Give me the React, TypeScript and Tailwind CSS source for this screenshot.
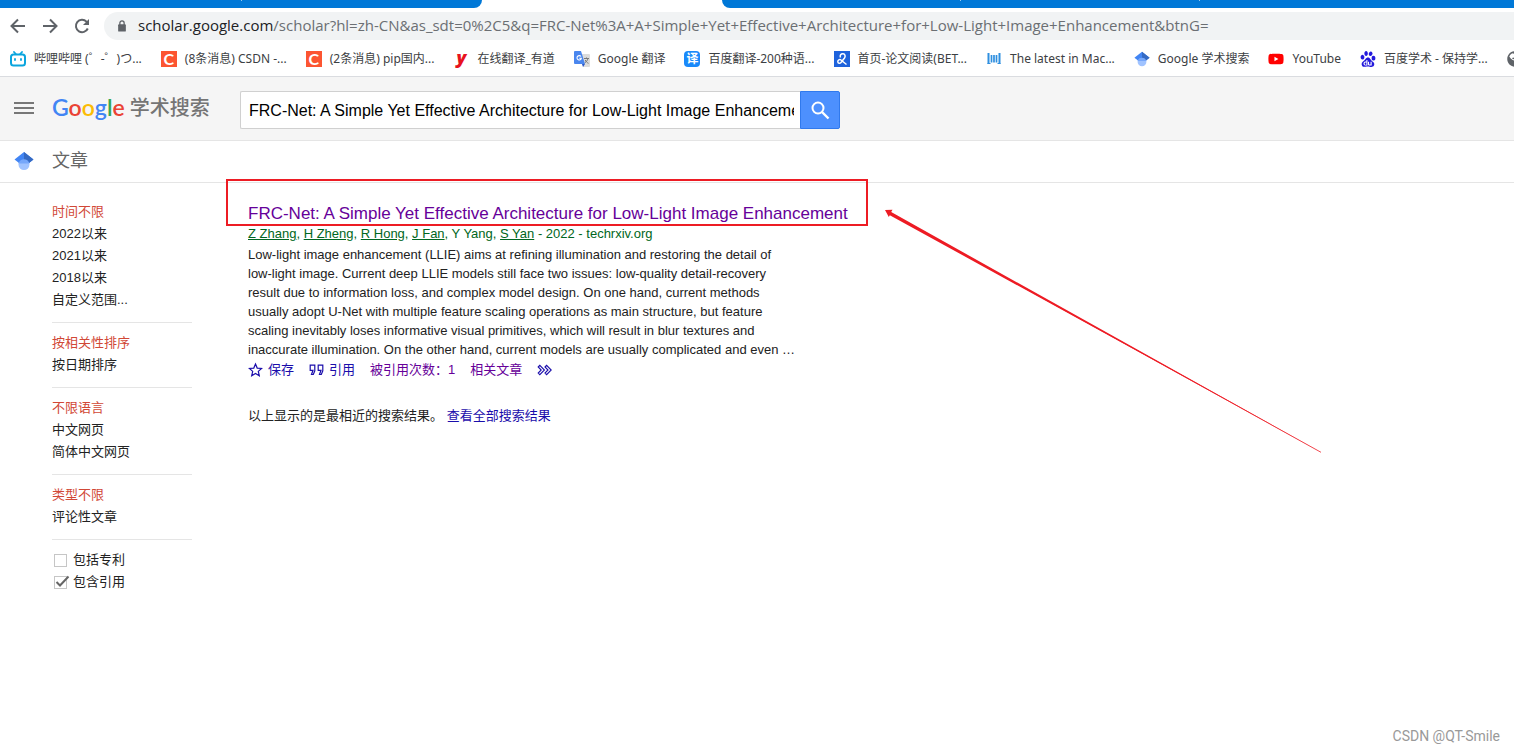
import type { ReactNode } from 'react'
import { FaYoutube, FaGlobeAmericas } from 'react-icons/fa'
import { SiBaidu } from 'react-icons/si'

type Bookmark = {
  label: string
  icon: ReactNode
}

type FilterGroup = {
  active: string
  options: string[]
}

const TITLE = 'FRC-Net: A Simple Yet Effective Architecture for Low-Light Image Enhancement'

const filterGroups: FilterGroup[] = [
  { active: '时间不限', options: ['2022以来', '2021以来', '2018以来', '自定义范围...'] },
  { active: '按相关性排序', options: ['按日期排序'] },
  { active: '不限语言', options: ['中文网页', '简体中文网页'] },
  { active: '类型不限', options: ['评论性文章'] },
]

const authors = [
  { name: 'Z Zhang', linked: true },
  { name: 'H Zheng', linked: true },
  { name: 'R Hong', linked: true },
  { name: 'J Fan', linked: true },
  { name: 'Y Yang', linked: false },
  { name: 'S Yan', linked: true },
]

function ScholarIcon({ className }: { className: string }) {
  return (
    <svg viewBox="0 0 20 20" className={className} aria-hidden="true">
      <circle cx="10" cy="13.5" r="5.5" fill="#a0c3ff" />
      <path d="M10 1 0.5 8.4 5 12a5.6 5.6 0 0 1 10 0l4.5-3.6z" fill="#4285f4" />
      <path d="M10 1l9.5 7.4L15 12a5.6 5.6 0 0 0-5-3z" fill="#356ac3" />
      <path d="M5 11.4a5.6 5.6 0 0 1 10 0 5.500 5.500 0 0 1 .4 1H4.600a5.500 5.500 0 0 1 .4-1z" fill="#76a7fa" />
    </svg>
  )
}

function BilibiliIcon() {
  return (
    <svg viewBox="0 0 16 16" className="size-4" fill="none" stroke="#0aa5de" strokeLinecap="round" aria-hidden="true">
      <rect x="1" y="3.500" width="14" height="11" rx="2.500" strokeWidth="2" />
      <path d="M4 1l1.800 2M12 1l-1.800 2" strokeWidth="1.800" />
      <path d="M5 8v1M11 8v1" strokeWidth="1.800" />
    </svg>
  )
}

function CsdnIcon() {
  return (
    <span className="flex size-4 items-center justify-center bg-[#fc5531] font-['Lato'] text-base leading-4 font-bold text-white">
      C
    </span>
  )
}

function TranslateIcon() {
  return (
    <svg viewBox="0 0 16 16" className="size-4" aria-hidden="true">
      <path d="M6 3h9a1 1 0 0 1 1 1v11a1 1 0 0 1-1 1H9z" fill="#dcdcdc" />
      <path d="M1 0h6l4 13H1a1 1 0 0 1-1-1V1a1 1 0 0 1 1-1z" fill="#4a86ee" />
      <path d="M8 13h3l-2 3z" fill="#2a56c6" />
      <path d="M7 5.500a2.200 2.200 0 1 0 .4 1.700H5.300" fill="none" stroke="#fff" strokeWidth="1.100" />
      <path d="M10 7.500h5M12.500 6.500v1M14 7.500c-.5 2-2 3.500-3.200 4.500M11.200 9c.6 1.500 2 2.700 3.300 3.300" fill="none" stroke="#777" strokeWidth="1" />
    </svg>
  )
}

function PaperIcon() {
  return (
    <svg viewBox="0 0 16 16" className="size-4" fill="none" stroke="#fff" strokeWidth="1.500" aria-hidden="true">
      <rect width="16" height="16" fill="#1f63dc" stroke="none" />
      <path d="M6.500 6.500C5.500 4.500 7 2.500 9 2.700s2.800 2.300 1.500 4.300L7 11.500c-1 1.300-3.200 1-3.200-.7S5.500 8 7 9l5.500 4.500" />
    </svg>
  )
}

function MacIcon() {
  return (
    <svg viewBox="0 0 16 16" className="size-4" fill="none" stroke="#2f8fe0" aria-hidden="true">
      <path d="M2.500 2v11M13.500 2v11" strokeWidth="2" />
      <path d="M1.500 12.500h3M11.500 12.500h3" strokeWidth="1" />
      <path d="M5.500 4v7.500M8 4v7.500M10.500 4v7.500" strokeWidth="1.700" />
    </svg>
  )
}

const bookmarks: Bookmark[] = [
  { label: '哔哩哔哩 (゜-゜)つ...', icon: <BilibiliIcon /> },
  { label: '(8条消息) CSDN -...', icon: <CsdnIcon /> },
  { label: '(2条消息) pip国内...', icon: <CsdnIcon /> },
  {
    label: '在线翻译_有道',
    icon: <span className="flex size-4 items-center justify-center pb-1 font-['Open_Sans'] text-lg leading-4 font-extrabold text-[#e8121d] italic">y</span>,
  },
  { label: 'Google 翻译', icon: <TranslateIcon /> },
  {
    label: '百度翻译-200种语...',
    icon: <span className="flex size-4 items-center justify-center rounded-sm bg-[#1989fa] text-xs leading-4 font-bold text-white">译</span>,
  },
  { label: '首页-论文阅读(BET...', icon: <PaperIcon /> },
  { label: 'The latest in Mac...', icon: <MacIcon /> },
  { label: 'Google 学术搜索', icon: <ScholarIcon className="size-4" /> },
  { label: 'YouTube', icon: <FaYoutube className="size-4 text-[#f00]" /> },
  { label: '百度学术 - 保持学...', icon: <SiBaidu className="size-4 text-[#2319dc]" /> },
]

function BrowserChrome() {
  return (
    <div className="border-b border-[#dadce0] bg-white font-['Open_Sans','Noto_Sans_CJK_SC',sans-serif]">
      {/* Tab strip */}
      <div className="flex h-2 bg-white">
        <div className="flex w-[482px] justify-center rounded-br-lg bg-[#0078d7]">
          <span className="h-px w-px bg-white/60" />
        </div>
        <div className="w-60" />
        <div className="flex flex-1 gap-[238px] rounded-bl-lg bg-[#0078d7] pl-[238px]">
          <span className="h-px w-px bg-white/60" />
          <span className="h-px w-px bg-white/60" />
        </div>
      </div>

      {/* Address bar */}
      <div className="flex items-center pt-1 pl-2">
        <div className="flex gap-3 text-[#5f6368]">
          <button type="button" aria-label="Back" className="size-5">
            <svg viewBox="0 0 20 20" fill="none" stroke="currentColor" strokeWidth="2">
              <path d="M17 10H4M10 3.500 3.500 10l6.500 6.500" />
            </svg>
          </button>
          <button type="button" aria-label="Forward" className="size-5">
            <svg viewBox="0 0 20 20" fill="none" stroke="currentColor" strokeWidth="2">
              <path d="M3 10h13M10 3.500l6.500 6.500-6.500 6.500" />
            </svg>
          </button>
          <button type="button" aria-label="Reload" className="size-5">
            <svg viewBox="0 0 20 20" fill="none" stroke="currentColor" strokeWidth="2">
              <path d="M15.800 12.500A6.200 6.200 0 1 1 14.500 5.600L16 7.200" />
              <path d="M17 3v6h-6z" fill="currentColor" stroke="none" />
            </svg>
          </button>
        </div>
        <div className="ml-3 flex h-7 flex-1 items-center gap-[10px] overflow-hidden rounded-l-full bg-[#f1f3f4] pl-3">
          <svg viewBox="0 0 12 14" className="h-3 w-3 shrink-0" aria-hidden="true">
            <path d="M3.500 6V3.500a2.500 2.500 0 0 1 5 0V6" fill="none" stroke="#5f6368" strokeWidth="1.500" />
            <rect x="1.500" y="5" width="9" height="8.500" rx="1" fill="#5f6368" />
          </svg>
          <p className="pb-0.5 text-[15px] leading-[26px] whitespace-nowrap text-[#6b6f73]">
            <span className="text-[#202124]">scholar.google.com</span>
            /scholar?hl=zh-CN&amp;as_sdt=0%2C5&amp;q=FRC-Net%3A+A+Simple+Yet+Effective+Architecture+for+Low-Light+Image+Enhancement&amp;btnG=
          </p>
        </div>
      </div>

      {/* Bookmarks */}
      <nav className="flex h-9 items-center gap-[19px] overflow-hidden pt-0.5 pl-[10px] font-['Noto_Sans','Noto_Sans_CJK_SC',sans-serif]">
        {bookmarks.map((bookmark) => (
          <a key={bookmark.label} href="#" className="flex shrink-0 items-center gap-2 text-xs whitespace-nowrap text-[#3c4043]">
            {bookmark.icon}
            {bookmark.label}
          </a>
        ))}
        <FaGlobeAmericas className="size-4 shrink-0 text-[#5f6368]" />
      </nav>
    </div>
  )
}

function Header() {
  return (
    <header className="flex h-16 items-center border-b border-[#e5e5e5] bg-[#f5f5f5] pl-[14px]">
      <button type="button" aria-label="Menu" className="mr-[18px] mb-0.5 flex w-5 flex-col gap-[3px]">
        <span className="h-0.5 bg-[#777]" />
        <span className="h-0.5 bg-[#777]" />
        <span className="h-0.5 bg-[#777]" />
      </button>
      <a href="#" className="flex w-[188px] items-center gap-[5px] pb-0.5 whitespace-nowrap">
        <span className="font-['Lato'] text-[23px] font-semibold">
          <span className="text-[#4285f4]">G</span>
          <span className="text-[#ea4335]">o</span>
          <span className="text-[#fbbc05]">o</span>
          <span className="text-[#4285f4]">g</span>
          <span className="text-[#34a853]">l</span>
          <span className="text-[#ea4335]">e</span>
        </span>
        <span className="text-xl font-medium text-[#757575]">学术搜索</span>
      </a>
      <form className="mt-0.5 flex h-[38px] w-[600px]" onSubmit={(e) => e.preventDefault()}>
        <input
          type="text"
          aria-label="搜索"
          defaultValue={TITLE}
          className="min-w-0 flex-1 rounded-l-xs border border-r-0 border-[#d0d0d0] bg-white pt-0.5 pr-[6px] pl-2 text-base text-black outline-none"
        />
        <button type="submit" aria-label="搜索" className="flex w-10 items-center justify-center rounded-r-xs border border-[#3079ed] bg-[#4d90fe]">
          <svg viewBox="0 0 20 20" className="size-5" fill="none" stroke="#fff" strokeWidth="2" aria-hidden="true">
            <circle cx="8" cy="8" r="5.500" />
            <path d="M12 12l6.500 6.500" strokeWidth="2.400" />
          </svg>
        </button>
      </form>
    </header>
  )
}

function CheckOption({ label, checked }: { label: string; checked: boolean }) {
  return (
    <label className="flex items-center gap-[6px] pl-0.5 leading-[22px]">
      <span className="relative flex size-[13px] items-center">
        <input type="checkbox" defaultChecked={checked} className="peer size-[13px] appearance-none border border-[#c6c6c6] bg-white" />
        <svg viewBox="0 0 16 16" className="pointer-events-none absolute bottom-0 left-0 hidden size-4 peer-checked:block" aria-hidden="true">
          <path d="M2.500 9l3.500 3.500L14.500 3.500" fill="none" stroke="#666" strokeWidth="2" />
        </svg>
      </span>
      {label}
    </label>
  )
}

function Sidebar() {
  return (
    <aside className="w-[140px] shrink-0 pt-[18px] leading-[22px] text-[#222]">
      {filterGroups.map((group) => (
        <ul key={group.active} className="mb-[9px] border-b border-[#e5e5e5] pb-[11px]">
          <li>
            <a href="#" className="text-[#d14836]">{group.active}</a>
          </li>
          {group.options.map((option) => (
            <li key={option}>
              <a href="#">{option}</a>
            </li>
          ))}
        </ul>
      ))}
      <CheckOption label="包括专利" checked={false} />
      <CheckOption label="包含引用" checked />
    </aside>
  )
}

function Result() {
  return (
    <article className="w-[548px]">
      <div className="relative">
        <h3 className="text-[17px] leading-5 whitespace-nowrap">
          <a href="#" className="text-[#609]">{TITLE}</a>
        </h3>
        {/* Highlight frame and the arrow that points to it */}
        <div className="pointer-events-none absolute -top-[25px] -left-[22px] h-[47px] w-[642px] border-2 border-[#ed1c24]" />
        <svg viewBox="0 0 440 246" className="pointer-events-none absolute top-1 left-[636px] h-[246px] w-[440px]" aria-hidden="true">
          <path d="M1 2l7.500-.3-1.300 2.400L437 244.200 5.800 7.200 4.800 9z" fill="#ed1c24" />
          <path d="M4 4.500L437 244.300" stroke="#ed1c24" strokeWidth="0.8" />
        </svg>
      </div>
      <p className="leading-5 text-[#006621]">
        {authors.map((author, i) => (
          <span key={author.name}>
            {i > 0 && ', '}
            {author.linked ? <a href="#" className="underline">{author.name}</a> : author.name}
          </span>
        ))}
        {' - 2022 - techrxiv.org'}
      </p>
      <p className="mt-px leading-[19px] text-[#222]">
        Low-light image enhancement (LLIE) aims at refining illumination and restoring the detail of low-light image.
        Current deep LLIE models still face two issues: low-quality detail-recovery result due to information loss, and
        complex model design. On one hand, current methods usually adopt U-Net with multiple feature scaling operations
        as main structure, but feature scaling inevitably loses informative visual primitives, which will result in blur
        textures and inaccurate illumination. On the other hand, current models are usually complicated and even …
      </p>
      <div className="flex items-center gap-[15px] leading-[22px] text-[#1a0dab]">
        <button type="button" className="flex items-center gap-[5px]">
          <svg viewBox="0 0 15 16" className="h-4 w-[15px]" fill="none" stroke="currentColor" strokeWidth="1.200" aria-hidden="true">
            <path d="M7.500 2l1.700 4.100 4.400.4-3.300 2.900 1 4.300-3.800-2.300-3.800 2.300 1-4.300L1.400 6.500l4.400-.4z" />
          </svg>
          保存
        </button>
        <button type="button" className="flex items-center gap-[5px]">
          <svg viewBox="0 0 15 16" className="h-4 w-[15px]" fill="none" stroke="currentColor" strokeWidth="1.200" aria-hidden="true">
            <path d="M1.200 3.200h4.600v5.600L4.300 12.500H2.500L4 8.300H1.200zM9.200 3.200h4.600v5.600l-1.500 3.700h-1.800L12 8.300H9.200z" />
          </svg>
          引用
        </button>
        <a href="#" className="text-[#609]">被引用次数：1</a>
        <a href="#" className="text-[#609]">相关文章</a>
        <button type="button" aria-label="更多">
          <svg viewBox="0 0 15 16" className="h-4 w-[15px]" fill="none" stroke="currentColor" strokeWidth="1.100" aria-hidden="true">
            <path d="M1.200 5l1.600-1.600L7.400 8l-4.600 4.600L1.200 11l3-3zM8 5l1.600-1.600L14.200 8l-4.600 4.600L8 11l3-3z" />
          </svg>
        </button>
      </div>
    </article>
  )
}

function App() {
  return (
    <div className="relative min-h-screen bg-white font-['Liberation_Sans','Noto_Sans_CJK_SC',sans-serif] text-[13px]">
      <BrowserChrome />
      <Header />
      <div className="flex h-[42px] items-center gap-[18px] border-b border-[#e5e5e5] pb-0.5 pl-[14px]">
        <ScholarIcon className="size-5" />
        <h1 className="text-lg leading-6 text-[#666]">文章</h1>
      </div>

      <div className="flex gap-14 pl-[52px]">
        <Sidebar />
        <main className="pt-[21px]">
          <Result />
          <p className="mt-6 leading-[22px] text-[#222]">
            以上显示的是最相近的搜索结果。{' '}
            <a href="#" className="text-[#1a0dab]">查看全部搜索结果</a>
          </p>
        </main>
      </div>

      <p className="absolute right-[14px] bottom-2 font-['Roboto',sans-serif] text-sm leading-[18px] text-[#999]">CSDN @QT-Smile</p>
    </div>
  )
}

export default App
